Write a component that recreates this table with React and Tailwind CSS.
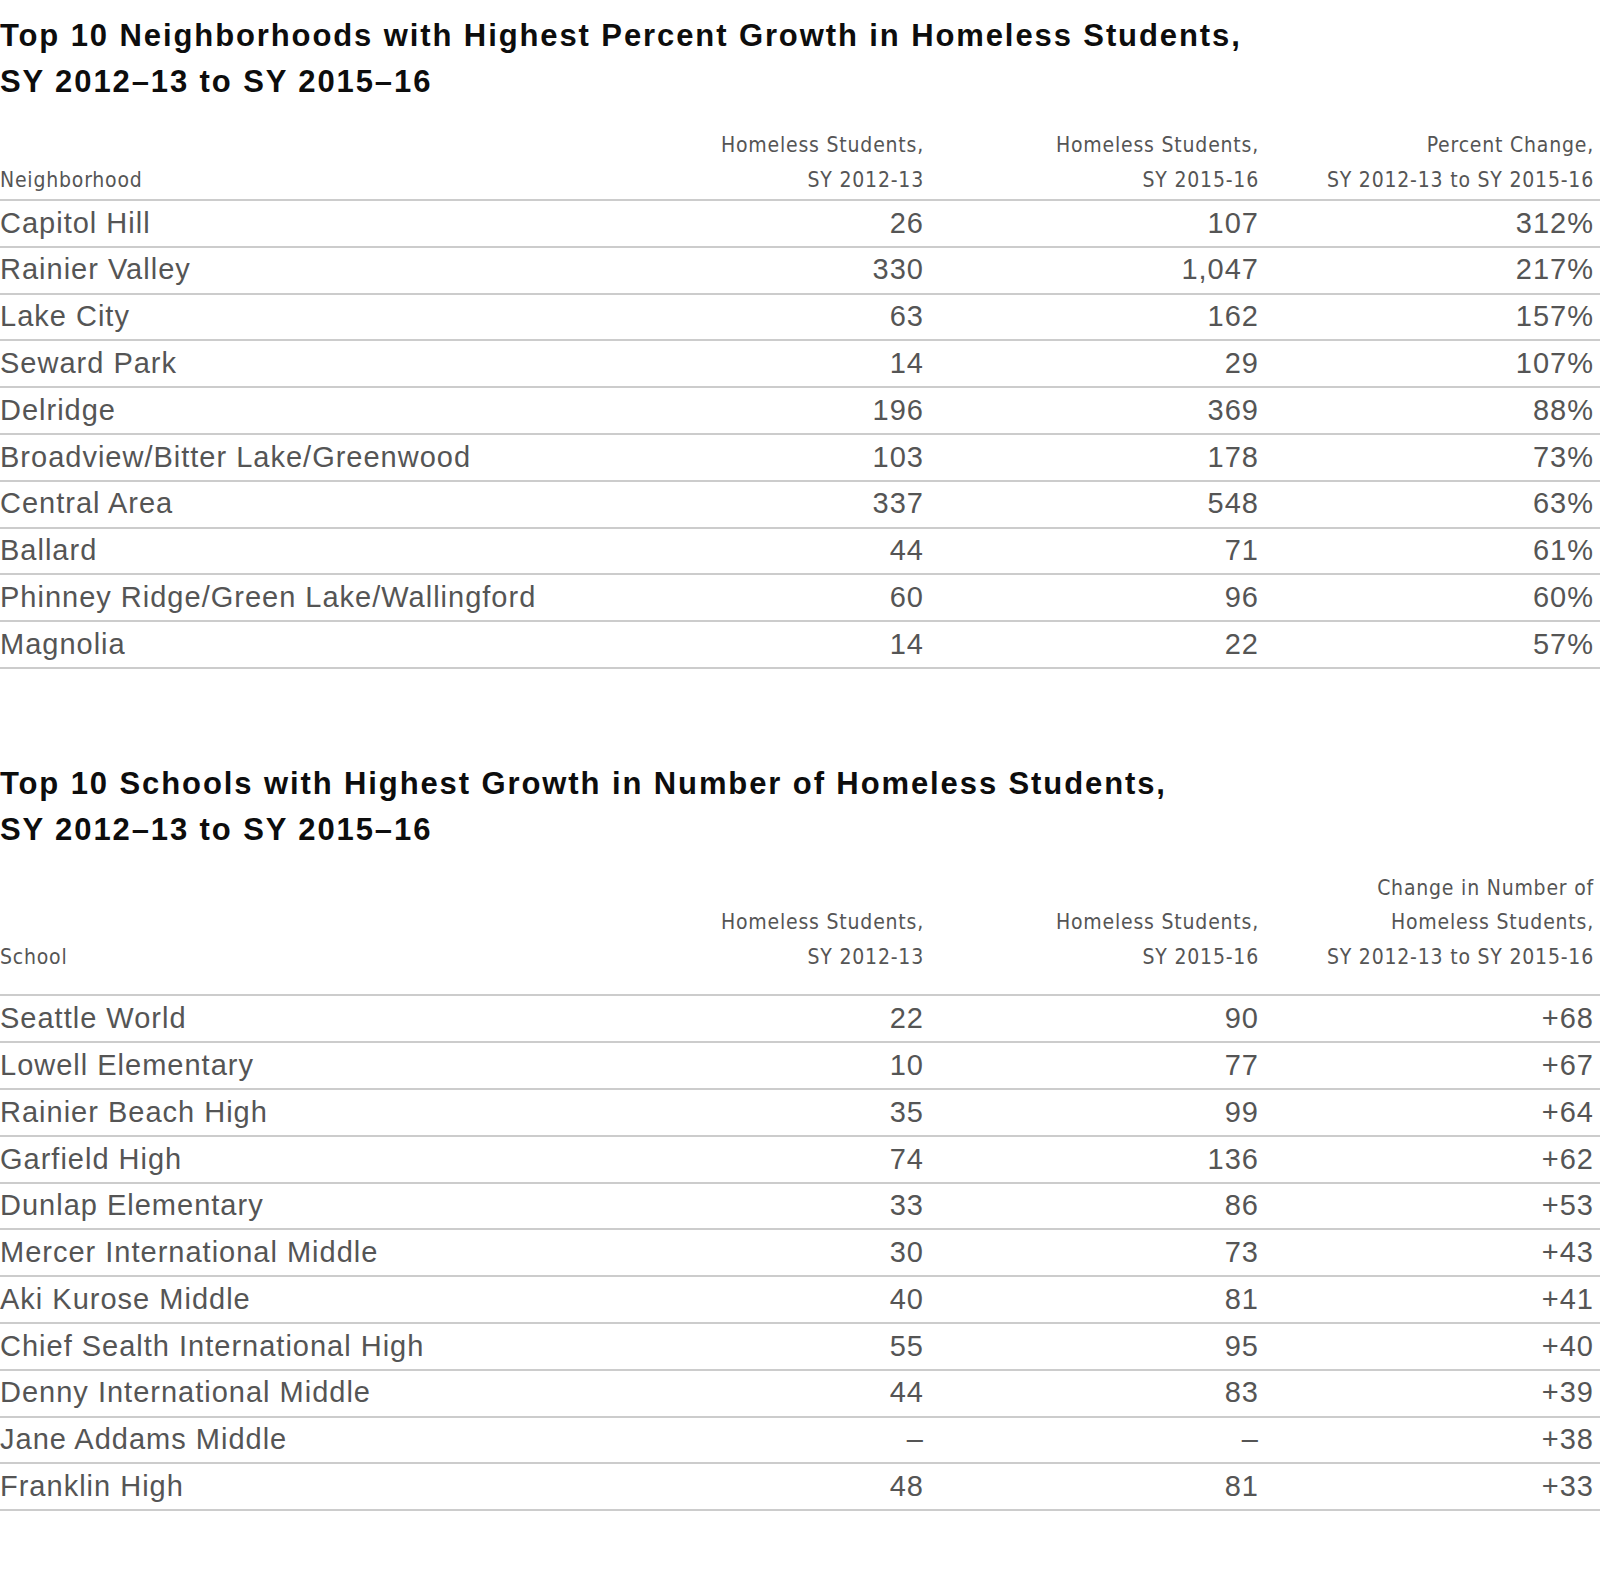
const neighborhoods = [
  ['Capitol Hill', '26', '107', '312%'],
  ['Rainier Valley', '330', '1,047', '217%'],
  ['Lake City', '63', '162', '157%'],
  ['Seward Park', '14', '29', '107%'],
  ['Delridge', '196', '369', '88%'],
  ['Broadview/Bitter Lake/Greenwood', '103', '178', '73%'],
  ['Central Area', '337', '548', '63%'],
  ['Ballard', '44', '71', '61%'],
  ['Phinney Ridge/Green Lake/Wallingford', '60', '96', '60%'],
  ['Magnolia', '14', '22', '57%'],
]

const schools = [
  ['Seattle World', '22', '90', '+68'],
  ['Lowell Elementary', '10', '77', '+67'],
  ['Rainier Beach High', '35', '99', '+64'],
  ['Garfield High', '74', '136', '+62'],
  ['Dunlap Elementary', '33', '86', '+53'],
  ['Mercer International Middle', '30', '73', '+43'],
  ['Aki Kurose Middle', '40', '81', '+41'],
  ['Chief Sealth International High', '55', '95', '+40'],
  ['Denny International Middle', '44', '83', '+39'],
  ['Jane Addams Middle', '–', '–', '+38'],
  ['Franklin High', '48', '81', '+33'],
]

function Title({ children }) {
  return (
    <h2 className="text-[31px] font-bold leading-[46px] tracking-[1.9px] text-[#0d0d0d]">
      {children}
    </h2>
  )
}

function Table({ headers, rows, headerPad }) {
  return (
    <div className="w-full">
      <div
        className={`grid grid-cols-[1fr_335px_335px_335px] items-end border-b-2 border-[#cccccc] font-['Liberation_Sans_Narrow','DejaVu_Sans_Condensed',sans-serif] text-[21px] leading-[34.5px] tracking-[0.8px] text-[#555] ${headerPad}`}
      >
        {headers.map((h, i) => (
          <div key={i} className={i === 0 ? 'text-left' : 'text-right pr-[6px]'}>
            {h}
          </div>
        ))}
      </div>
      {rows.map((r) => (
        <div
          key={r[0]}
          className="grid h-[46.8px] grid-cols-[1fr_335px_335px_335px] items-center border-b-2 border-[#cccccc] text-[29px] tracking-[1px] text-[#555]"
        >
          {r.map((c, i) => (
            <div key={i} className={i === 0 ? 'text-left' : 'text-right pr-[6px]'}>
              {c}
            </div>
          ))}
        </div>
      ))}
    </div>
  )
}

export default function App() {
  return (
    <div className="min-h-[1573px] w-full bg-white font-['Liberation_Sans',Arial,sans-serif]">
      <div className="pt-[13px]">
        <Title>
          Top 10 Neighborhoods with Highest Percent Growth in Homeless Students,
          <br />
          SY 2012–13 to SY 2015–16
        </Title>
        <div className="mt-[23px]">
          <Table
            headerPad="pb-[2px]"
            headers={[
              'Neighborhood',
              <>Homeless Students,<br />SY 2012-13</>,
              <>Homeless Students,<br />SY 2015-16</>,
              <>Percent Change,<br />SY 2012-13 to SY 2015-16</>,
            ]}
            rows={neighborhoods}
          />
        </div>
      </div>

      <div className="mt-[92px]">
        <Title>
          Top 10 Schools with Highest Growth in Number of Homeless Students,
          <br />
          SY 2012–13 to SY 2015–16
        </Title>
        <div className="mt-[18px]">
          <Table
            headerPad="pb-[20px]"
            headers={[
              'School',
              <>Homeless Students,<br />SY 2012-13</>,
              <>Homeless Students,<br />SY 2015-16</>,
              <>Change in Number of<br />Homeless Students,<br />SY 2012-13 to SY 2015-16</>,
            ]}
            rows={schools}
          />
        </div>
      </div>
    </div>
  )
}
